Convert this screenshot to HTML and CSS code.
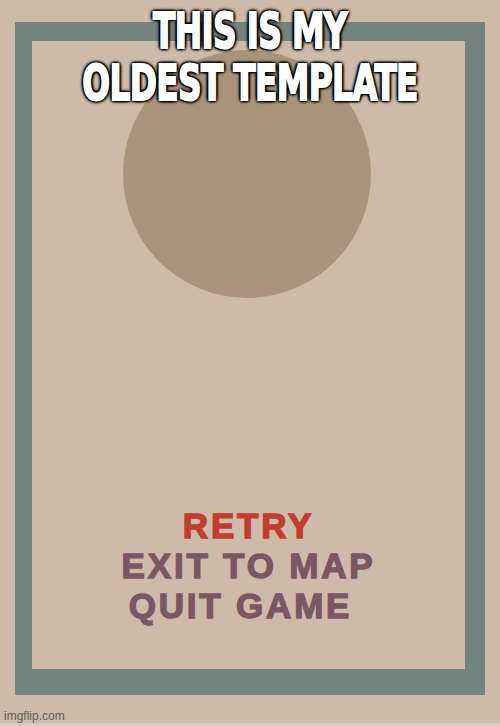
FILE: index.html
```html
<!DOCTYPE html>
<html lang="en">
<head>
<meta charset="utf-8">
<title>This is my oldest template</title>
<link rel="stylesheet" href="styles.css">
</head>
<body>
  <div class="meme">
    <div class="frame">
      <div class="portrait"></div>
      <ul class="menu">
        <li class="menu-item menu-item--active">RETRY</li>
        <li class="menu-item">EXIT TO MAP</li>
        <li class="menu-item menu-item--pad">QUIT GAME</li>
      </ul>
    </div>
    <div class="caption">
      <span class="caption-line">THIS IS MY</span>
      <span class="caption-line">OLDEST TEMPLATE</span>
    </div>
    <div class="footer">
      <span class="watermark">imgflip.com</span>
    </div>
  </div>
</body>
</html>
```

FILE: styles.css
```css
* {
  box-sizing: border-box;
}

html, body {
  margin: 0;
  padding: 0;
  background: #cebaa9;
}

.meme {
  position: relative;
  width: 500px;
  height: 726px;
  overflow: hidden;
  background: #cebaa9;
  display: flex;
  flex-direction: column;
}

/* game-over card with the teal border */
.frame {
  margin: 22px 15px 0 15px;
  height: 673px;
  border-style: solid;
  border-color: #72847d;
  border-width: 19px 20px 26px 17px;
  display: flex;
  flex-direction: column;
  align-items: center;
}

.portrait {
  width: 248px;
  height: 248px;
  margin-top: 9px;
  margin-left: -3px;
  border-radius: 50%;
  background: #a9947b;
}

.menu {
  list-style: none;
  margin: 208px 0 0 0;
  padding: 0;
  text-align: center;
  font-family: "Liberation Sans", Arial, sans-serif;
  font-weight: 700;
  font-size: 35px;
  line-height: 40px;
  letter-spacing: 2.8px;
  color: #7b5763;
  -webkit-text-stroke: 1.4px #7b5763;
}

.menu-item--active {
  color: #c23c30;
  -webkit-text-stroke-color: #c23c30;
}

.menu-item--pad {
  padding-right: 16px;
}

/* impact-style caption over the picture */
.caption {
  position: absolute;
  top: 5px;
  left: 0;
  right: 0;
  display: flex;
  flex-direction: column;
  align-items: center;
  font-family: "DejaVu Sans", sans-serif;
  font-weight: 700;
  font-size: 50px;
  line-height: 52px;
  color: #ffffff;
  -webkit-text-stroke: 2px #ffffff;
  text-shadow:
    0 0 2px #000,
    0 0 3px #000,
    2px 2px 3px #000,
    -2px -2px 3px #000,
    2px -2px 3px #000,
    -2px 2px 3px #000,
    3px 0 3px #000,
    -3px 0 3px #000;
}

.caption-line {
  display: block;
  white-space: nowrap;
  letter-spacing: -1px;
  transform: scaleX(0.655);
}

.footer {
  margin-top: auto;
  height: 31px;
  display: flex;
  flex-direction: column;
  justify-content: flex-end;
}

.watermark {
  display: block;
  padding-left: 4px;
  font-family: "Liberation Sans", Arial, sans-serif;
  font-size: 12px;
  line-height: 14px;
  color: #5f5a57;
  border-bottom: 3px solid #d8cabe;
}
```
